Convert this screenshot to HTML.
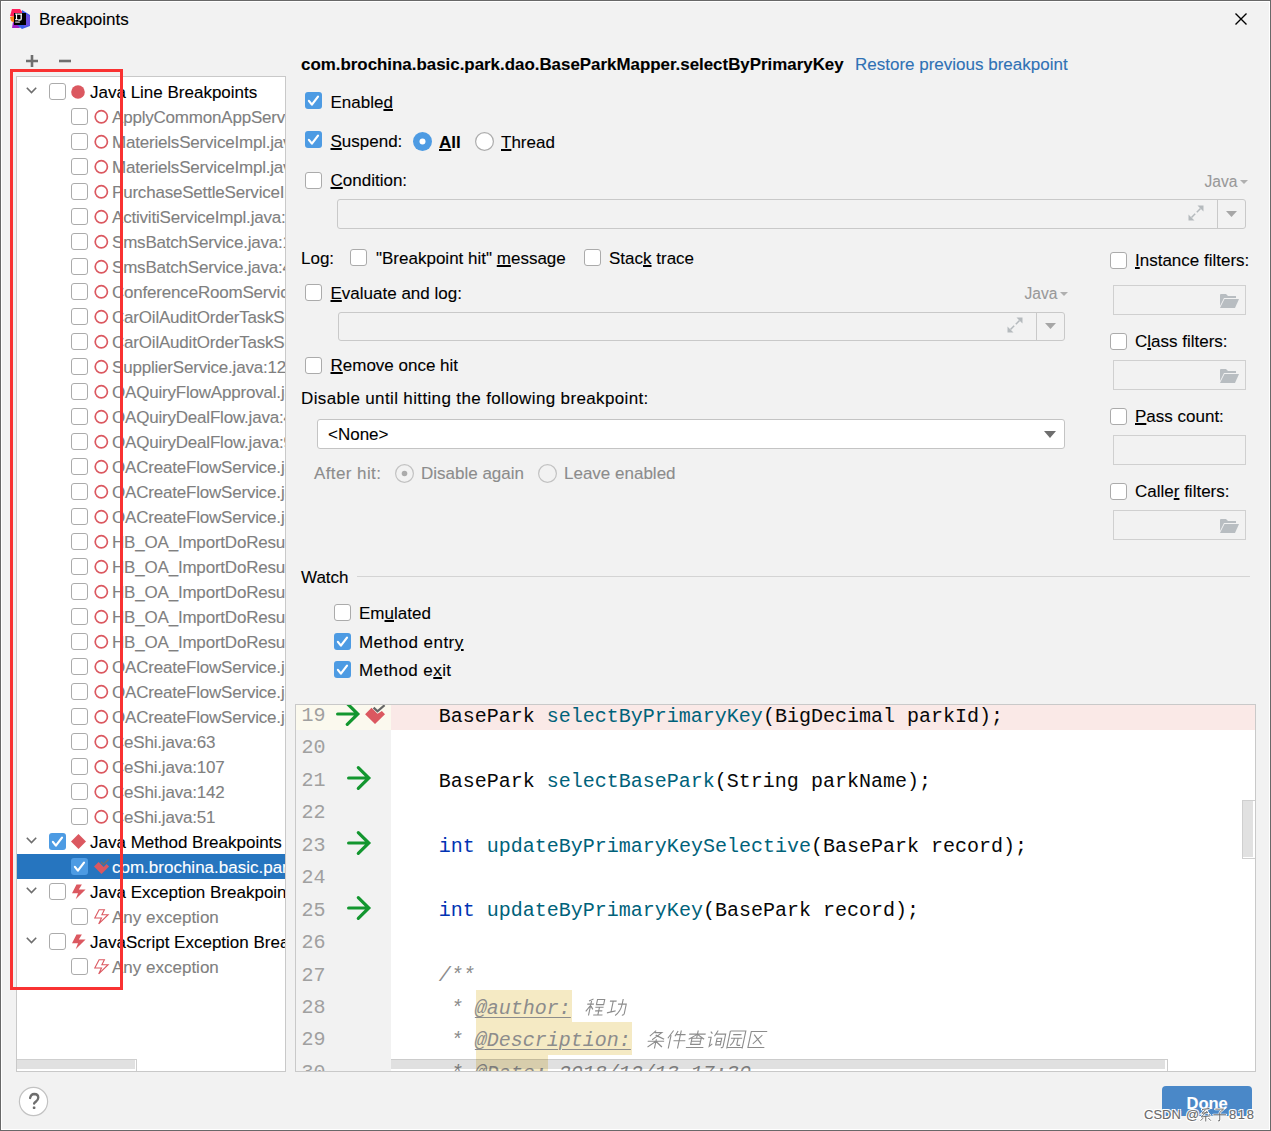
<!DOCTYPE html><html><head><meta charset="utf-8"><style>
html,body{margin:0;padding:0}
body{width:1271px;height:1131px;position:relative;overflow:hidden;background:#F2F2F2;font-family:"Liberation Sans",sans-serif;font-size:17px;color:#000}
div,svg{position:absolute}
svg{overflow:visible}
.t{white-space:nowrap;-webkit-text-stroke:0.1px currentColor}
u{text-decoration:underline;text-underline-offset:1px;text-decoration-thickness:2px}
.cb{box-sizing:border-box;border:1px solid #ABABAB;border-radius:3px;background:#fff}
.cb.on{border:none;background:#4D9BE3}
.cb svg{left:0;top:0}
.frame{left:0;top:0;width:1271px;height:1131px;box-sizing:border-box;border:1px solid #686868;box-shadow:inset 0 0 0 1px #fff}
.field{box-sizing:border-box;border:1px solid #C9C9C9;border-radius:3px;background:#F2F2F2}

.tree{left:16px;top:76px;width:270px;height:996px;box-sizing:border-box;border:1px solid #C9C9C9;background:#fff;overflow:hidden}
.tree div{position:absolute}
.sel{left:0;width:268px;height:25px;background:#2675BF}
.hsb{left:0;top:982px;width:120px;height:12px;background:#fff;box-sizing:border-box;border-top:1px solid #CFCFCF;border-right:1px solid #CFCFCF}
.hsb i{position:absolute;left:0;top:0;width:118px;height:9px;background:#E1E1E1}

.fld{box-sizing:border-box;border:1px solid #C9C9C9;border-radius:3px;background:#F2F2F2}
.combo{box-sizing:border-box;border:1px solid #C4C4C4;border-radius:3px;background:#fff}
.rad{box-sizing:border-box;border-radius:50%}

.ed{left:295px;top:704px;width:961px;height:368px;box-sizing:border-box;border:1px solid #C9C9C9;background:#fff;overflow:hidden}
.ed div,.ed svg{position:absolute}
.gut{left:0;top:0;width:95px;height:366px;background:#F2F2F2}
.code{font-family:"Liberation Mono",monospace;font-size:20px;line-height:20px;white-space:pre;color:#080808}
.ln{color:#A0A0A0}
.fn{color:#00627A}
.kw{color:#0033B3}
.cm{color:#8C8C8C;font-style:italic}
.tag{color:#8C8C8C;font-style:italic;text-decoration:underline;text-underline-offset:3px;text-decoration-thickness:1px}

.wm{font-family:"Liberation Sans",sans-serif;color:#6A6A6A;text-shadow:0 0 1px #fff,1px 1px 0 #fff,-1px -1px 0 #fff,1px -1px 0 #fff,-1px 1px 0 #fff}
</style></head><body><div class="frame"></div><svg style="left:10px;top:9px" width="20" height="20" viewBox="0 0 20 20">
<polygon points="2,0 10,0 13,4 12,9 0,7" fill="#FF1F5B"/>
<polygon points="0,8 5,7 5,14 1,12" fill="#FF7F18"/>
<polygon points="3,13 8,15 10,19 2,19" fill="#A020C8"/>
<polygon points="12,1 20,6 20,17 12,20 7,16 12,9" fill="#3B5CE8"/>
<polygon points="14,4 20,7 20,16 14,18" fill="#6A4FE0"/>
<rect x="4" y="4" width="12" height="12" fill="#000"/>
<path d="M5.2 5.2 H7.8 M6.5 5.2 V10.6 M5.2 10.6 H7.8" stroke="#fff" stroke-width="1.2" fill="none"/>
<path d="M8 5.2 H12 M11.2 5 V10 Q11.2 11 10 11 H8.2" stroke="#fff" stroke-width="1.3" fill="none"/>
<rect x="5.2" y="12.6" width="4.6" height="1" fill="#fff"/>
</svg><div class="t " style="left:39px;top:10.61px;font-size:17px;line-height:17px;color:#000;font-weight:normal;">Breakpoints</div><svg style="left:1235px;top:13px" width="12" height="12" viewBox="0 0 12 12"><path d="M0.5 0.5 L11.5 11.5 M11.5 0.5 L0.5 11.5" stroke="#000" stroke-width="1.4"/></svg><svg style="left:26px;top:55px" width="12" height="12" viewBox="0 0 12 12"><path d="M6 0 V12 M0 6 H12" stroke="#6E6E6E" stroke-width="2.6"/></svg><svg style="left:59px;top:55px" width="12" height="12" viewBox="0 0 12 12"><path d="M0 6 H12" stroke="#6E6E6E" stroke-width="2.6"/></svg><div class="tree"><svg style="left:9px;top:9.5px" width="11" height="7" viewBox="0 0 11 7"><path d="M0.8 0.8 L5.5 5.5 L10.2 0.8" fill="none" stroke="#6E6E6E" stroke-width="1.6"/></svg><div class="cb" style="left:32px;top:5.5px;width:17px;height:17px"></div><svg style="left:54.0px;top:7.5px" width="14" height="14"><circle cx="7" cy="7" r="6.8" fill="#DB5860"/></svg><div class="t " style="left:73px;top:6.91px;font-size:17px;line-height:17px;color:#000;font-weight:normal;">Java Line Breakpoints</div><div class="cb" style="left:54px;top:30.5px;width:17px;height:17px"></div><svg style="left:77px;top:32.5px" width="14" height="14"><circle cx="7.3" cy="6.8" r="6.1" fill="none" stroke="#DB5860" stroke-width="1.7"/></svg><div class="t " style="left:95px;top:31.91px;font-size:17px;line-height:17px;color:#808080;font-weight:normal;letter-spacing:-0.2px">ApplyCommonAppServiceImpl.java:88</div><div class="cb" style="left:54px;top:55.5px;width:17px;height:17px"></div><svg style="left:77px;top:57.5px" width="14" height="14"><circle cx="7.3" cy="6.8" r="6.1" fill="none" stroke="#DB5860" stroke-width="1.7"/></svg><div class="t " style="left:95px;top:56.91px;font-size:17px;line-height:17px;color:#808080;font-weight:normal;letter-spacing:-0.2px">MaterielsServiceImpl.java:120</div><div class="cb" style="left:54px;top:80.5px;width:17px;height:17px"></div><svg style="left:77px;top:82.5px" width="14" height="14"><circle cx="7.3" cy="6.8" r="6.1" fill="none" stroke="#DB5860" stroke-width="1.7"/></svg><div class="t " style="left:95px;top:81.91px;font-size:17px;line-height:17px;color:#808080;font-weight:normal;letter-spacing:-0.2px">MaterielsServiceImpl.java:245</div><div class="cb" style="left:54px;top:105.5px;width:17px;height:17px"></div><svg style="left:77px;top:107.5px" width="14" height="14"><circle cx="7.3" cy="6.8" r="6.1" fill="none" stroke="#DB5860" stroke-width="1.7"/></svg><div class="t " style="left:95px;top:106.91px;font-size:17px;line-height:17px;color:#808080;font-weight:normal;letter-spacing:-0.2px">PurchaseSettleServiceImpl.java:77</div><div class="cb" style="left:54px;top:130.5px;width:17px;height:17px"></div><svg style="left:77px;top:132.5px" width="14" height="14"><circle cx="7.3" cy="6.8" r="6.1" fill="none" stroke="#DB5860" stroke-width="1.7"/></svg><div class="t " style="left:95px;top:131.91px;font-size:17px;line-height:17px;color:#808080;font-weight:normal;letter-spacing:-0.2px">ActivitiServiceImpl.java:301</div><div class="cb" style="left:54px;top:155.5px;width:17px;height:17px"></div><svg style="left:77px;top:157.5px" width="14" height="14"><circle cx="7.3" cy="6.8" r="6.1" fill="none" stroke="#DB5860" stroke-width="1.7"/></svg><div class="t " style="left:95px;top:156.91px;font-size:17px;line-height:17px;color:#808080;font-weight:normal;letter-spacing:-0.2px">SmsBatchService.java:110</div><div class="cb" style="left:54px;top:180.5px;width:17px;height:17px"></div><svg style="left:77px;top:182.5px" width="14" height="14"><circle cx="7.3" cy="6.8" r="6.1" fill="none" stroke="#DB5860" stroke-width="1.7"/></svg><div class="t " style="left:95px;top:181.91px;font-size:17px;line-height:17px;color:#808080;font-weight:normal;letter-spacing:-0.2px">SmsBatchService.java:45</div><div class="cb" style="left:54px;top:205.5px;width:17px;height:17px"></div><svg style="left:77px;top:207.5px" width="14" height="14"><circle cx="7.3" cy="6.8" r="6.1" fill="none" stroke="#DB5860" stroke-width="1.7"/></svg><div class="t " style="left:95px;top:206.91px;font-size:17px;line-height:17px;color:#808080;font-weight:normal;letter-spacing:-0.2px">ConferenceRoomServiceImpl.java:66</div><div class="cb" style="left:54px;top:230.5px;width:17px;height:17px"></div><svg style="left:77px;top:232.5px" width="14" height="14"><circle cx="7.3" cy="6.8" r="6.1" fill="none" stroke="#DB5860" stroke-width="1.7"/></svg><div class="t " style="left:95px;top:231.91px;font-size:17px;line-height:17px;color:#808080;font-weight:normal;letter-spacing:-0.2px">CarOilAuditOrderTaskService.java:50</div><div class="cb" style="left:54px;top:255.5px;width:17px;height:17px"></div><svg style="left:77px;top:257.5px" width="14" height="14"><circle cx="7.3" cy="6.8" r="6.1" fill="none" stroke="#DB5860" stroke-width="1.7"/></svg><div class="t " style="left:95px;top:256.91px;font-size:17px;line-height:17px;color:#808080;font-weight:normal;letter-spacing:-0.2px">CarOilAuditOrderTaskService.java:81</div><div class="cb" style="left:54px;top:280.5px;width:17px;height:17px"></div><svg style="left:77px;top:282.5px" width="14" height="14"><circle cx="7.3" cy="6.8" r="6.1" fill="none" stroke="#DB5860" stroke-width="1.7"/></svg><div class="t " style="left:95px;top:281.91px;font-size:17px;line-height:17px;color:#808080;font-weight:normal;letter-spacing:-0.2px">SupplierService.java:129</div><div class="cb" style="left:54px;top:305.5px;width:17px;height:17px"></div><svg style="left:77px;top:307.5px" width="14" height="14"><circle cx="7.3" cy="6.8" r="6.1" fill="none" stroke="#DB5860" stroke-width="1.7"/></svg><div class="t " style="left:95px;top:306.91px;font-size:17px;line-height:17px;color:#808080;font-weight:normal;letter-spacing:-0.2px">OAQuiryFlowApproval.java:33</div><div class="cb" style="left:54px;top:330.5px;width:17px;height:17px"></div><svg style="left:77px;top:332.5px" width="14" height="14"><circle cx="7.3" cy="6.8" r="6.1" fill="none" stroke="#DB5860" stroke-width="1.7"/></svg><div class="t " style="left:95px;top:331.91px;font-size:17px;line-height:17px;color:#808080;font-weight:normal;letter-spacing:-0.2px">OAQuiryDealFlow.java:47</div><div class="cb" style="left:54px;top:355.5px;width:17px;height:17px"></div><svg style="left:77px;top:357.5px" width="14" height="14"><circle cx="7.3" cy="6.8" r="6.1" fill="none" stroke="#DB5860" stroke-width="1.7"/></svg><div class="t " style="left:95px;top:356.91px;font-size:17px;line-height:17px;color:#808080;font-weight:normal;letter-spacing:-0.2px">OAQuiryDealFlow.java:92</div><div class="cb" style="left:54px;top:380.5px;width:17px;height:17px"></div><svg style="left:77px;top:382.5px" width="14" height="14"><circle cx="7.3" cy="6.8" r="6.1" fill="none" stroke="#DB5860" stroke-width="1.7"/></svg><div class="t " style="left:95px;top:381.91px;font-size:17px;line-height:17px;color:#808080;font-weight:normal;letter-spacing:-0.2px">OACreateFlowService.java:120</div><div class="cb" style="left:54px;top:405.5px;width:17px;height:17px"></div><svg style="left:77px;top:407.5px" width="14" height="14"><circle cx="7.3" cy="6.8" r="6.1" fill="none" stroke="#DB5860" stroke-width="1.7"/></svg><div class="t " style="left:95px;top:406.91px;font-size:17px;line-height:17px;color:#808080;font-weight:normal;letter-spacing:-0.2px">OACreateFlowService.java:134</div><div class="cb" style="left:54px;top:430.5px;width:17px;height:17px"></div><svg style="left:77px;top:432.5px" width="14" height="14"><circle cx="7.3" cy="6.8" r="6.1" fill="none" stroke="#DB5860" stroke-width="1.7"/></svg><div class="t " style="left:95px;top:431.91px;font-size:17px;line-height:17px;color:#808080;font-weight:normal;letter-spacing:-0.2px">OACreateFlowService.java:156</div><div class="cb" style="left:54px;top:455.5px;width:17px;height:17px"></div><svg style="left:77px;top:457.5px" width="14" height="14"><circle cx="7.3" cy="6.8" r="6.1" fill="none" stroke="#DB5860" stroke-width="1.7"/></svg><div class="t " style="left:95px;top:456.91px;font-size:17px;line-height:17px;color:#808080;font-weight:normal;letter-spacing:-0.2px">HB_OA_ImportDoResult.java:40</div><div class="cb" style="left:54px;top:480.5px;width:17px;height:17px"></div><svg style="left:77px;top:482.5px" width="14" height="14"><circle cx="7.3" cy="6.8" r="6.1" fill="none" stroke="#DB5860" stroke-width="1.7"/></svg><div class="t " style="left:95px;top:481.91px;font-size:17px;line-height:17px;color:#808080;font-weight:normal;letter-spacing:-0.2px">HB_OA_ImportDoResult.java:52</div><div class="cb" style="left:54px;top:505.5px;width:17px;height:17px"></div><svg style="left:77px;top:507.5px" width="14" height="14"><circle cx="7.3" cy="6.8" r="6.1" fill="none" stroke="#DB5860" stroke-width="1.7"/></svg><div class="t " style="left:95px;top:506.91px;font-size:17px;line-height:17px;color:#808080;font-weight:normal;letter-spacing:-0.2px">HB_OA_ImportDoResult.java:61</div><div class="cb" style="left:54px;top:530.5px;width:17px;height:17px"></div><svg style="left:77px;top:532.5px" width="14" height="14"><circle cx="7.3" cy="6.8" r="6.1" fill="none" stroke="#DB5860" stroke-width="1.7"/></svg><div class="t " style="left:95px;top:531.91px;font-size:17px;line-height:17px;color:#808080;font-weight:normal;letter-spacing:-0.2px">HB_OA_ImportDoResult.java:73</div><div class="cb" style="left:54px;top:555.5px;width:17px;height:17px"></div><svg style="left:77px;top:557.5px" width="14" height="14"><circle cx="7.3" cy="6.8" r="6.1" fill="none" stroke="#DB5860" stroke-width="1.7"/></svg><div class="t " style="left:95px;top:556.91px;font-size:17px;line-height:17px;color:#808080;font-weight:normal;letter-spacing:-0.2px">HB_OA_ImportDoResult.java:88</div><div class="cb" style="left:54px;top:580.5px;width:17px;height:17px"></div><svg style="left:77px;top:582.5px" width="14" height="14"><circle cx="7.3" cy="6.8" r="6.1" fill="none" stroke="#DB5860" stroke-width="1.7"/></svg><div class="t " style="left:95px;top:581.91px;font-size:17px;line-height:17px;color:#808080;font-weight:normal;letter-spacing:-0.2px">OACreateFlowService.java:201</div><div class="cb" style="left:54px;top:605.5px;width:17px;height:17px"></div><svg style="left:77px;top:607.5px" width="14" height="14"><circle cx="7.3" cy="6.8" r="6.1" fill="none" stroke="#DB5860" stroke-width="1.7"/></svg><div class="t " style="left:95px;top:606.91px;font-size:17px;line-height:17px;color:#808080;font-weight:normal;letter-spacing:-0.2px">OACreateFlowService.java:215</div><div class="cb" style="left:54px;top:630.5px;width:17px;height:17px"></div><svg style="left:77px;top:632.5px" width="14" height="14"><circle cx="7.3" cy="6.8" r="6.1" fill="none" stroke="#DB5860" stroke-width="1.7"/></svg><div class="t " style="left:95px;top:631.91px;font-size:17px;line-height:17px;color:#808080;font-weight:normal;letter-spacing:-0.2px">OACreateFlowService.java:230</div><div class="cb" style="left:54px;top:655.5px;width:17px;height:17px"></div><svg style="left:77px;top:657.5px" width="14" height="14"><circle cx="7.3" cy="6.8" r="6.1" fill="none" stroke="#DB5860" stroke-width="1.7"/></svg><div class="t " style="left:95px;top:656.91px;font-size:17px;line-height:17px;color:#808080;font-weight:normal;letter-spacing:-0.2px">CeShi.java:63</div><div class="cb" style="left:54px;top:680.5px;width:17px;height:17px"></div><svg style="left:77px;top:682.5px" width="14" height="14"><circle cx="7.3" cy="6.8" r="6.1" fill="none" stroke="#DB5860" stroke-width="1.7"/></svg><div class="t " style="left:95px;top:681.91px;font-size:17px;line-height:17px;color:#808080;font-weight:normal;letter-spacing:-0.2px">CeShi.java:107</div><div class="cb" style="left:54px;top:705.5px;width:17px;height:17px"></div><svg style="left:77px;top:707.5px" width="14" height="14"><circle cx="7.3" cy="6.8" r="6.1" fill="none" stroke="#DB5860" stroke-width="1.7"/></svg><div class="t " style="left:95px;top:706.91px;font-size:17px;line-height:17px;color:#808080;font-weight:normal;letter-spacing:-0.2px">CeShi.java:142</div><div class="cb" style="left:54px;top:730.5px;width:17px;height:17px"></div><svg style="left:77px;top:732.5px" width="14" height="14"><circle cx="7.3" cy="6.8" r="6.1" fill="none" stroke="#DB5860" stroke-width="1.7"/></svg><div class="t " style="left:95px;top:731.91px;font-size:17px;line-height:17px;color:#808080;font-weight:normal;letter-spacing:-0.2px">CeShi.java:51</div><div class="sel" style="top:777px"></div><svg style="left:9px;top:759.5px" width="11" height="7" viewBox="0 0 11 7"><path d="M0.8 0.8 L5.5 5.5 L10.2 0.8" fill="none" stroke="#6E6E6E" stroke-width="1.6"/></svg><div class="cb on" style="left:32px;top:755.5px;width:17px;height:17px"><svg width="17" height="17" viewBox="0 0 17 17"><path d="M3.9 8.9 L6.9 12.6 L13 4.6" fill="none" stroke="#fff" stroke-width="2.2" stroke-linecap="round" stroke-linejoin="round"/></svg></div><svg style="left:54.0px;top:757.0px" width="15" height="15"><polygon points="7.5,0 15,7.5 7.5,15 0,7.5" fill="#DB5860"/></svg><div class="t " style="left:73px;top:756.91px;font-size:17px;line-height:17px;color:#000;font-weight:normal;">Java Method Breakpoints</div><div class="cb on" style="left:54px;top:780.5px;width:17px;height:17px"><svg width="17" height="17" viewBox="0 0 17 17"><path d="M3.9 8.9 L6.9 12.6 L13 4.6" fill="none" stroke="#fff" stroke-width="2.2" stroke-linecap="round" stroke-linejoin="round"/></svg></div><svg style="left:77px;top:782.0px" width="15" height="15" viewBox="0 0 15 15"><polygon points="0,7.5 4.6,2.9 9.7,8 12.6,5.1 15,7.5 7.5,15" fill="#DB5860"/><path d="M7 2.7 L9.4 5.3 L14.6 0.5" fill="none" stroke="#6E6E6E" stroke-width="1.6"/></svg><div class="t " style="left:95px;top:781.91px;font-size:17px;line-height:17px;color:#fff;font-weight:normal;letter-spacing:0px">com.brochina.basic.park.dao.BaseParkMapper</div><svg style="left:9px;top:809.5px" width="11" height="7" viewBox="0 0 11 7"><path d="M0.8 0.8 L5.5 5.5 L10.2 0.8" fill="none" stroke="#6E6E6E" stroke-width="1.6"/></svg><div class="cb" style="left:32px;top:805.5px;width:17px;height:17px"></div><svg style="left:53.5px;top:806.5px" width="16" height="16" viewBox="0 0 16 16"><polygon points="5.50,0.60 10.90,0.60 7.80,5.60 14.60,5.60 4.70,15.20 7.00,9.30 1.00,9.30" fill="#DB5860"/></svg><div class="t " style="left:73px;top:806.91px;font-size:17px;line-height:17px;color:#000;font-weight:normal;">Java Exception Breakpoints</div><div class="cb" style="left:54px;top:830.5px;width:17px;height:17px"></div><svg style="left:76px;top:831.5px" width="16" height="16" viewBox="0 0 16 16"><polygon points="6.10,0.70 11.40,0.70 8.90,5.70 15.10,5.70 5.70,14.90 8.50,9.00 1.80,9.00" fill="none" stroke="#DB5860" stroke-width="1.1" stroke-linejoin="miter"/></svg><div class="t " style="left:95px;top:831.91px;font-size:17px;line-height:17px;color:#808080;font-weight:normal;letter-spacing:0px">Any exception</div><svg style="left:9px;top:859.5px" width="11" height="7" viewBox="0 0 11 7"><path d="M0.8 0.8 L5.5 5.5 L10.2 0.8" fill="none" stroke="#6E6E6E" stroke-width="1.6"/></svg><div class="cb" style="left:32px;top:855.5px;width:17px;height:17px"></div><svg style="left:53.5px;top:856.5px" width="16" height="16" viewBox="0 0 16 16"><polygon points="5.50,0.60 10.90,0.60 7.80,5.60 14.60,5.60 4.70,15.20 7.00,9.30 1.00,9.30" fill="#DB5860"/></svg><div class="t " style="left:73px;top:856.91px;font-size:17px;line-height:17px;color:#000;font-weight:normal;">JavaScript Exception Breakpoints</div><div class="cb" style="left:54px;top:880.5px;width:17px;height:17px"></div><svg style="left:76px;top:881.5px" width="16" height="16" viewBox="0 0 16 16"><polygon points="6.10,0.70 11.40,0.70 8.90,5.70 15.10,5.70 5.70,14.90 8.50,9.00 1.80,9.00" fill="none" stroke="#DB5860" stroke-width="1.1" stroke-linejoin="miter"/></svg><div class="t " style="left:95px;top:881.91px;font-size:17px;line-height:17px;color:#808080;font-weight:normal;letter-spacing:0px">Any exception</div><div class="hsb"><i></i></div></div><div style="left:10px;top:69px;width:113px;height:921px;box-sizing:border-box;border:3px solid #F93232"></div><div class="t " style="left:301px;top:56.69px;font-size:16.9px;line-height:16.9px;color:#000;font-weight:bold;">com.brochina.basic.park.dao.BaseParkMapper.selectByPrimaryKey</div><div class="t " style="left:855px;top:55.61px;font-size:17px;line-height:17px;color:#2F71B5;font-weight:normal;">Restore previous breakpoint</div><div class="cb on" style="left:305px;top:92px;width:17px;height:17px"><svg width="17" height="17" viewBox="0 0 17 17"><path d="M3.9 8.9 L6.9 12.6 L13 4.6" fill="none" stroke="#fff" stroke-width="2.2" stroke-linecap="round" stroke-linejoin="round"/></svg></div><div class="t " style="left:330.5px;top:93.61px;font-size:17px;line-height:17px;color:#000;font-weight:normal;">Enable<u>d</u></div><div class="cb on" style="left:305px;top:131px;width:17px;height:17px"><svg width="17" height="17" viewBox="0 0 17 17"><path d="M3.9 8.9 L6.9 12.6 L13 4.6" fill="none" stroke="#fff" stroke-width="2.2" stroke-linecap="round" stroke-linejoin="round"/></svg></div><div class="t " style="left:330.5px;top:132.61px;font-size:17px;line-height:17px;color:#000;font-weight:normal;"><u>S</u>uspend:</div><svg style="left:413.1px;top:132.1px" width="19.0" height="19.0"><circle cx="9.5" cy="9.5" r="9.5" fill="#4D9BE3"/><circle cx="9.5" cy="9.5" r="3" fill="#fff"/></svg><div class="t " style="left:439px;top:133.61px;font-size:17px;line-height:17px;color:#000;font-weight:bold;"><u>A</u>ll</div><svg style="left:475.1px;top:132.1px" width="19.0" height="19.0"><circle cx="9.5" cy="9.5" r="8.9" fill="#fff" stroke="#ADADAD" stroke-width="1.2"/></svg><div class="t " style="left:501px;top:133.61px;font-size:17px;line-height:17px;color:#000;font-weight:normal;"><u>T</u>hread</div><div class="cb" style="left:305px;top:172px;width:17px;height:17px"></div><div class="t " style="left:330.5px;top:171.61px;font-size:17px;line-height:17px;color:#000;font-weight:normal;"><u>C</u>ondition:</div><div class="t " style="left:1204.5px;top:173.79px;font-size:15.6px;line-height:15.6px;color:#999999;font-weight:normal;">Java</div><svg style="left:1239.5px;top:180px" width="8" height="4" viewBox="0 0 8 4"><polygon points="0,0 8,0 4.0,4" fill="#B0B0B0"/></svg><div class="fld" style="left:337px;top:199px;width:909px;height:30px"></div><div style="left:1217px;top:200px;width:1px;height:28px;background:#C9C9C9"></div><svg style="left:1188px;top:205px" width="16" height="16" viewBox="0 0 16 16"><path d="M9.5 0.5 H15.5 V6.5 Z M0.5 9.5 V15.5 H6.5 Z" fill="#B5BABD"/><path d="M12.5 3.5 L8.8 7.2 M3.5 12.5 L7.2 8.8" stroke="#B5BABD" stroke-width="1.5"/></svg><svg style="left:1226px;top:211px" width="11" height="6" viewBox="0 0 11 6"><polygon points="0,0 11,0 5.5,6" fill="#A6A6A6"/></svg><div class="t " style="left:301px;top:249.61px;font-size:17px;line-height:17px;color:#000;font-weight:normal;">Log:</div><div class="cb" style="left:350px;top:249px;width:17px;height:17px"></div><div class="t " style="left:376px;top:249.61px;font-size:17px;line-height:17px;color:#000;font-weight:normal;">"Breakpoint hit" <u>m</u>essage</div><div class="cb" style="left:584px;top:249px;width:17px;height:17px"></div><div class="t " style="left:609px;top:249.61px;font-size:17px;line-height:17px;color:#000;font-weight:normal;">Stac<u>k</u> trace</div><div class="cb" style="left:305px;top:284px;width:17px;height:17px"></div><div class="t " style="left:330.5px;top:284.61px;font-size:17px;line-height:17px;color:#000;font-weight:normal;"><u>E</u>valuate and log:</div><div class="t " style="left:1024.5px;top:285.79px;font-size:15.6px;line-height:15.6px;color:#999999;font-weight:normal;">Java</div><svg style="left:1059.5px;top:292px" width="8" height="4" viewBox="0 0 8 4"><polygon points="0,0 8,0 4.0,4" fill="#B0B0B0"/></svg><div class="fld" style="left:337.5px;top:311.5px;width:727px;height:29px"></div><div style="left:1036px;top:312px;width:1px;height:28px;background:#C9C9C9"></div><svg style="left:1007px;top:317px" width="16" height="16" viewBox="0 0 16 16"><path d="M9.5 0.5 H15.5 V6.5 Z M0.5 9.5 V15.5 H6.5 Z" fill="#B5BABD"/><path d="M12.5 3.5 L8.8 7.2 M3.5 12.5 L7.2 8.8" stroke="#B5BABD" stroke-width="1.5"/></svg><svg style="left:1045px;top:323px" width="11" height="6" viewBox="0 0 11 6"><polygon points="0,0 11,0 5.5,6" fill="#A6A6A6"/></svg><div class="cb" style="left:305px;top:357px;width:17px;height:17px"></div><div class="t " style="left:330.5px;top:356.61px;font-size:17px;line-height:17px;color:#000;font-weight:normal;"><u>R</u>emove once hit</div><div class="t " style="left:301px;top:389.61px;font-size:17px;line-height:17px;color:#000;font-weight:normal;letter-spacing:0.36px">Disable until hitting the following breakpoint:</div><div class="combo" style="left:317px;top:419px;width:748px;height:30px"></div><div class="t " style="left:328px;top:425.61px;font-size:17px;line-height:17px;color:#000;font-weight:normal;">&lt;None&gt;</div><svg style="left:1044px;top:431px" width="12" height="7" viewBox="0 0 12 7"><polygon points="0,0 12,0 6.0,7" fill="#6E6E6E"/></svg><div class="t " style="left:314px;top:464.61px;font-size:17px;line-height:17px;color:#8C8C8C;font-weight:normal;letter-spacing:0.4px">After hit:</div><svg style="left:395.0px;top:463.5px" width="19.0" height="19.0"><circle cx="9.5" cy="9.5" r="8.9" fill="#F2F2F2" stroke="#C2C2C2" stroke-width="1.2"/><circle cx="9.5" cy="9.5" r="2.8" fill="#ABABAB"/></svg><div class="t " style="left:421px;top:464.61px;font-size:17px;line-height:17px;color:#8C8C8C;font-weight:normal;">Disable again</div><svg style="left:538.0px;top:463.5px" width="19.0" height="19.0"><circle cx="9.5" cy="9.5" r="8.9" fill="#F2F2F2" stroke="#C2C2C2" stroke-width="1.2"/></svg><div class="t " style="left:564px;top:464.61px;font-size:17px;line-height:17px;color:#8C8C8C;font-weight:normal;">Leave enabled</div><div class="cb" style="left:1110px;top:252px;width:17px;height:17px"></div><div class="t " style="left:1135px;top:251.61px;font-size:17px;line-height:17px;color:#000;font-weight:normal;"><u>I</u>nstance filters:</div><div class="fld" style="left:1113px;top:285px;width:133px;height:30px;border-radius:0;border-color:#D0D0D0"></div><svg style="left:1220px;top:294px" width="19" height="14" viewBox="0 0 19 14"><path d="M0 1 Q0 0 1 0 H6 L8 2 H16 V4 H4 L0 12 Z" fill="#B8BDC1"/><path d="M4.5 5 H19 L15 14 H0 Z" fill="#B8BDC1"/></svg><div class="cb" style="left:1110px;top:333px;width:17px;height:17px"></div><div class="t " style="left:1135px;top:332.61px;font-size:17px;line-height:17px;color:#000;font-weight:normal;">C<u>l</u>ass filters:</div><div class="fld" style="left:1113px;top:360px;width:133px;height:30px;border-radius:0;border-color:#D0D0D0"></div><svg style="left:1220px;top:369px" width="19" height="14" viewBox="0 0 19 14"><path d="M0 1 Q0 0 1 0 H6 L8 2 H16 V4 H4 L0 12 Z" fill="#B8BDC1"/><path d="M4.5 5 H19 L15 14 H0 Z" fill="#B8BDC1"/></svg><div class="cb" style="left:1110px;top:408px;width:17px;height:17px"></div><div class="t " style="left:1135px;top:407.61px;font-size:17px;line-height:17px;color:#000;font-weight:normal;"><u>P</u>ass count:</div><div class="fld" style="left:1113px;top:435px;width:133px;height:30px;border-radius:0;border-color:#D0D0D0"></div><div class="cb" style="left:1110px;top:483px;width:17px;height:17px"></div><div class="t " style="left:1135px;top:482.61px;font-size:17px;line-height:17px;color:#000;font-weight:normal;">Calle<u>r</u> filters:</div><div class="fld" style="left:1113px;top:510px;width:133px;height:30px;border-radius:0;border-color:#D0D0D0"></div><svg style="left:1220px;top:519px" width="19" height="14" viewBox="0 0 19 14"><path d="M0 1 Q0 0 1 0 H6 L8 2 H16 V4 H4 L0 12 Z" fill="#B8BDC1"/><path d="M4.5 5 H19 L15 14 H0 Z" fill="#B8BDC1"/></svg><div class="t " style="left:301px;top:568.61px;font-size:17px;line-height:17px;color:#000;font-weight:normal;">Watch</div><div style="left:357px;top:576px;width:893px;height:1px;background:#D4D4D4"></div><div class="cb" style="left:334px;top:604px;width:17px;height:17px"></div><div class="t " style="left:359px;top:604.61px;font-size:17px;line-height:17px;color:#000;font-weight:normal;">Em<u>u</u>lated</div><div class="cb on" style="left:334px;top:633px;width:17px;height:17px"><svg width="17" height="17" viewBox="0 0 17 17"><path d="M3.9 8.9 L6.9 12.6 L13 4.6" fill="none" stroke="#fff" stroke-width="2.2" stroke-linecap="round" stroke-linejoin="round"/></svg></div><div class="t " style="left:359px;top:633.61px;font-size:17px;line-height:17px;color:#000;font-weight:normal;letter-spacing:0.45px">Method entr<u>y</u></div><div class="cb on" style="left:334px;top:661px;width:17px;height:17px"><svg width="17" height="17" viewBox="0 0 17 17"><path d="M3.9 8.9 L6.9 12.6 L13 4.6" fill="none" stroke="#fff" stroke-width="2.2" stroke-linecap="round" stroke-linejoin="round"/></svg></div><div class="t " style="left:359px;top:661.61px;font-size:17px;line-height:17px;color:#000;font-weight:normal;letter-spacing:0.42px">Method e<u>x</u>it</div><div class="ed"><div class="gut"></div><div style="left:0;top:-7.30px;width:95px;height:32.5px;background:#FBF9EE"></div><div style="left:95px;top:-7.30px;width:870px;height:32.5px;background:#FAE9E7"></div><div style="left:179.5px;top:284.93px;width:96.0px;height:32.5px;background:#F5EAC4"></div><div style="left:179.5px;top:317.40px;width:156.0px;height:32.5px;background:#F5EAC4"></div><div style="left:179.5px;top:349.87px;width:72.0px;height:32.5px;background:#F5EAC4"></div><div class="code ln" style="left:5.5px;top:0.77px">19</div><div class="code ln" style="left:5.5px;top:33.24px">20</div><div class="code ln" style="left:5.5px;top:65.71px">21</div><div class="code ln" style="left:5.5px;top:98.18px">22</div><div class="code ln" style="left:5.5px;top:130.65px">23</div><div class="code ln" style="left:5.5px;top:163.12px">24</div><div class="code ln" style="left:5.5px;top:195.59px">25</div><div class="code ln" style="left:5.5px;top:228.06px">26</div><div class="code ln" style="left:5.5px;top:260.53px">27</div><div class="code ln" style="left:5.5px;top:293.00px">28</div><div class="code ln" style="left:5.5px;top:325.47px">29</div><div class="code ln" style="left:5.5px;top:357.94px">30</div><div class="code" style="left:94.80000000000001px;top:1.67px">    BasePark <span class="fn">selectByPrimaryKey</span>(BigDecimal parkId);</div><div class="code" style="left:94.80000000000001px;top:66.61px">    BasePark <span class="fn">selectBasePark</span>(String parkName);</div><div class="code" style="left:94.80000000000001px;top:131.55px">    <span class="kw">int</span> <span class="fn">updateByPrimaryKeySelective</span>(BasePark record);</div><div class="code" style="left:94.80000000000001px;top:196.49px">    <span class="kw">int</span> <span class="fn">updateByPrimaryKey</span>(BasePark record);</div><div class="code" style="left:94.80000000000001px;top:261.43px">    <span class="cm">/**</span></div><div class="code" style="left:94.80000000000001px;top:293.90px">    <span class="cm"> * </span><span class="tag">@author:</span></div><div class="code" style="left:94.80000000000001px;top:326.37px">    <span class="cm"> * </span><span class="tag">@Description:</span></div><div class="code" style="left:94.80000000000001px;top:358.84px">    <span class="cm"> * </span><span class="tag">@Date:</span><span class="cm"> 2018/12/13 17:30</span></div><svg style="left:40.30000000000001px;top:-3px" width="24" height="24" viewBox="0 0 24 24"><path d="M1.6 12 H21.5 M11.3 1.6 L21.8 12 L11.3 22.4" fill="none" stroke="#13962F" stroke-width="3.2" stroke-linecap="round" stroke-linejoin="miter"/></svg><svg style="left:50.69999999999999px;top:61.44000000000017px" width="24" height="24" viewBox="0 0 24 24"><path d="M1.6 12 H21.5 M11.3 1.6 L21.8 12 L11.3 22.4" fill="none" stroke="#13962F" stroke-width="3.2" stroke-linecap="round" stroke-linejoin="miter"/></svg><svg style="left:50.69999999999999px;top:126.38000000000011px" width="24" height="24" viewBox="0 0 24 24"><path d="M1.6 12 H21.5 M11.3 1.6 L21.8 12 L11.3 22.4" fill="none" stroke="#13962F" stroke-width="3.2" stroke-linecap="round" stroke-linejoin="miter"/></svg><svg style="left:50.69999999999999px;top:191.32000000000005px" width="24" height="24" viewBox="0 0 24 24"><path d="M1.6 12 H21.5 M11.3 1.6 L21.8 12 L11.3 22.4" fill="none" stroke="#13962F" stroke-width="3.2" stroke-linecap="round" stroke-linejoin="miter"/></svg><svg style="left:64px;top:-5px" width="30" height="30" viewBox="0 0 30 30"><polygon points="5.1,14.3 11.5,7.7 17.5,13.8 21.9,11 25,14.2 15,23.9" fill="#DB5860"/><path d="M13.6 7.6 L17.5 11.3 L24.6 5.2" fill="none" stroke="#666" stroke-width="2.2"/></svg><div style="left:946px;top:95px;width:13px;height:59px;box-sizing:border-box;background:#fff;border:1px solid #CFCFCF;border-right:none"><i style="position:absolute;left:0;top:0;width:10px;height:56px;background:#E1E1E1"></i></div><div style="left:95px;top:354px;width:777px;height:12px;box-sizing:border-box;background:transparent;border-top:1px solid rgba(0,0,0,0.2);border-right:1px solid rgba(0,0,0,0.2)"><i style="position:absolute;left:0;top:0;width:774px;height:9px;background:rgba(0,0,0,0.12)"></i></div></div><svg style="left:585.0px;top:998px" width="18.5" height="18.5" viewBox="0 0 18 18"><path d="M5.5 1 L1.5 3 M0.5 6 H7 M4 3 V17 M4 7 L0.5 13 M4.5 8 L7 11 M9.5 1.5 H16.5 V6.5 H9.5 Z M9 9 H17 M9.5 12.5 H16.5 M8.5 16.5 H17.5 M13 9 V16.5" fill="none" stroke="#8C8C8C" stroke-width="1.1" transform="translate(3 0) skewX(-12)"/></svg><svg style="left:606.5px;top:998px" width="18.5" height="18.5" viewBox="0 0 18 18"><path d="M0.5 3 H7 M3.75 3 V14 M0 14.5 L8 12.5 M9 6 H17 V15 Q17 17 15 16.5 M13 1 V6 Q13 13 8.5 17" fill="none" stroke="#8C8C8C" stroke-width="1.1" transform="translate(3 0) skewX(-12)"/></svg><svg style="left:645.5px;top:1029.5px" width="18.5" height="18.5" viewBox="0 0 18 18"><path d="M7 0.5 L2 6 M6 2.5 H13 L5 9.5 M7.5 5 L16.5 9 M1 11 H17 M9 9 V18 M8.5 11.5 L2 16.5 M9.5 11.5 L16 16.5" fill="none" stroke="#8C8C8C" stroke-width="1.1" transform="translate(3 0) skewX(-12)"/></svg><svg style="left:665.7px;top:1029.5px" width="18.5" height="18.5" viewBox="0 0 18 18"><path d="M4.5 0.5 L0.5 8 M3 5 V18 M9 1 L7 6 M8 4.5 H17 M6.5 10.5 H18 M12 0.5 V18" fill="none" stroke="#8C8C8C" stroke-width="1.1" transform="translate(3 0) skewX(-12)"/></svg><svg style="left:685.9px;top:1029.5px" width="18.5" height="18.5" viewBox="0 0 18 18"><path d="M1 4 H17 M9 0.5 V8 M8.5 4.5 L1.5 9 M9.5 4.5 L16.5 9 M4.5 8 H13.5 V14 H4.5 Z M4.5 11 H13.5 M0.5 17 H17.5" fill="none" stroke="#8C8C8C" stroke-width="1.1" transform="translate(3 0) skewX(-12)"/></svg><svg style="left:706.1px;top:1029.5px" width="18.5" height="18.5" viewBox="0 0 18 18"><path d="M2 1.5 L4 3.5 M0.5 7 H3.5 V16 L6 13.5 M9 0.5 L6.5 6 M8 4 H17 V16 Q17 17.5 15 17 M9.5 8 H14 V14.5 H9.5 Z M9.5 11.2 H14" fill="none" stroke="#8C8C8C" stroke-width="1.1" transform="translate(3 0) skewX(-12)"/></svg><svg style="left:726.3px;top:1029.5px" width="18.5" height="18.5" viewBox="0 0 18 18"><path d="M1.5 1 V18 M1.5 1 H16.5 V18 M1.5 17 H16.5 M5 4.5 H13 M3.5 8 H14.5 M7 8 Q7 13 4 15 M10.5 8 V13.5 Q10.5 15 12.5 15 H14" fill="none" stroke="#8C8C8C" stroke-width="1.1" transform="translate(3 0) skewX(-12)"/></svg><svg style="left:746.5px;top:1029.5px" width="18.5" height="18.5" viewBox="0 0 18 18"><path d="M1 1.5 H17 M1.5 1.5 V17 H17.5 M5 4.5 L14 14 M13 5 L5.5 13.5" fill="none" stroke="#8C8C8C" stroke-width="1.1" transform="translate(3 0) skewX(-12)"/></svg><svg style="left:18px;top:1086px" width="31" height="31" viewBox="0 0 31 31"><circle cx="15.5" cy="15.5" r="14.1" fill="#fff" stroke="#C2C2C2" stroke-width="1.2"/><path d="M12.1 12 Q13 8.1 16.2 8 Q20.3 8.1 20.3 11.8 Q20.2 13.8 18 15.5 Q16.2 16.9 16.1 17.5" fill="none" stroke="#6E6E6E" stroke-width="2.3" stroke-linecap="round"/><rect x="14.8" y="20.4" width="2.6" height="2.5" rx="0.6" fill="#6E6E6E"/></svg><div style="left:1162px;top:1086px;width:90px;height:30px;background:#4A88C8;border-radius:4px"></div><div class="t " style="left:1186.5px;top:1094.53px;font-size:16.5px;line-height:16.5px;color:#fff;font-weight:bold;">Done</div><div class="t wm" style="left:1144px;top:1108.40px;font-size:13px;line-height:13px">CSDN</div><div class="t wm" style="left:1186px;top:1108.40px;font-size:13px;line-height:13px">@</div><svg style="left:1198.5px;top:1107.5px" width="13.5" height="13.5" viewBox="0 0 18 18"><path d="M14 0.5 L4 2 M9 2 L4 7 L12 6 M11 4 L3 12 L15 10.5 M13 8 L15 10 M9 12 V18 M5.5 13.5 L2 17 M12.5 13.5 L16 17" fill="none" stroke="#fff" stroke-width="2.9000000000000004" stroke-linecap="round"/><path d="M14 0.5 L4 2 M9 2 L4 7 L12 6 M11 4 L3 12 L15 10.5 M13 8 L15 10 M9 12 V18 M5.5 13.5 L2 17 M12.5 13.5 L16 17" fill="none" stroke="#6A6A6A" stroke-width="1.3"/></svg><svg style="left:1212.8px;top:1107.5px" width="13.5" height="13.5" viewBox="0 0 18 18"><path d="M3 1.5 H14 L9 6 M9 6 V16 Q9 18 6.5 17 M0.5 9 H17.5" fill="none" stroke="#fff" stroke-width="2.9000000000000004" stroke-linecap="round"/><path d="M3 1.5 H14 L9 6 M9 6 V16 Q9 18 6.5 17 M0.5 9 H17.5" fill="none" stroke="#6A6A6A" stroke-width="1.3"/></svg><div class="t wm" style="left:1229px;top:1108.40px;font-size:13px;line-height:13px;letter-spacing:1.6px">818</div></body></html>
